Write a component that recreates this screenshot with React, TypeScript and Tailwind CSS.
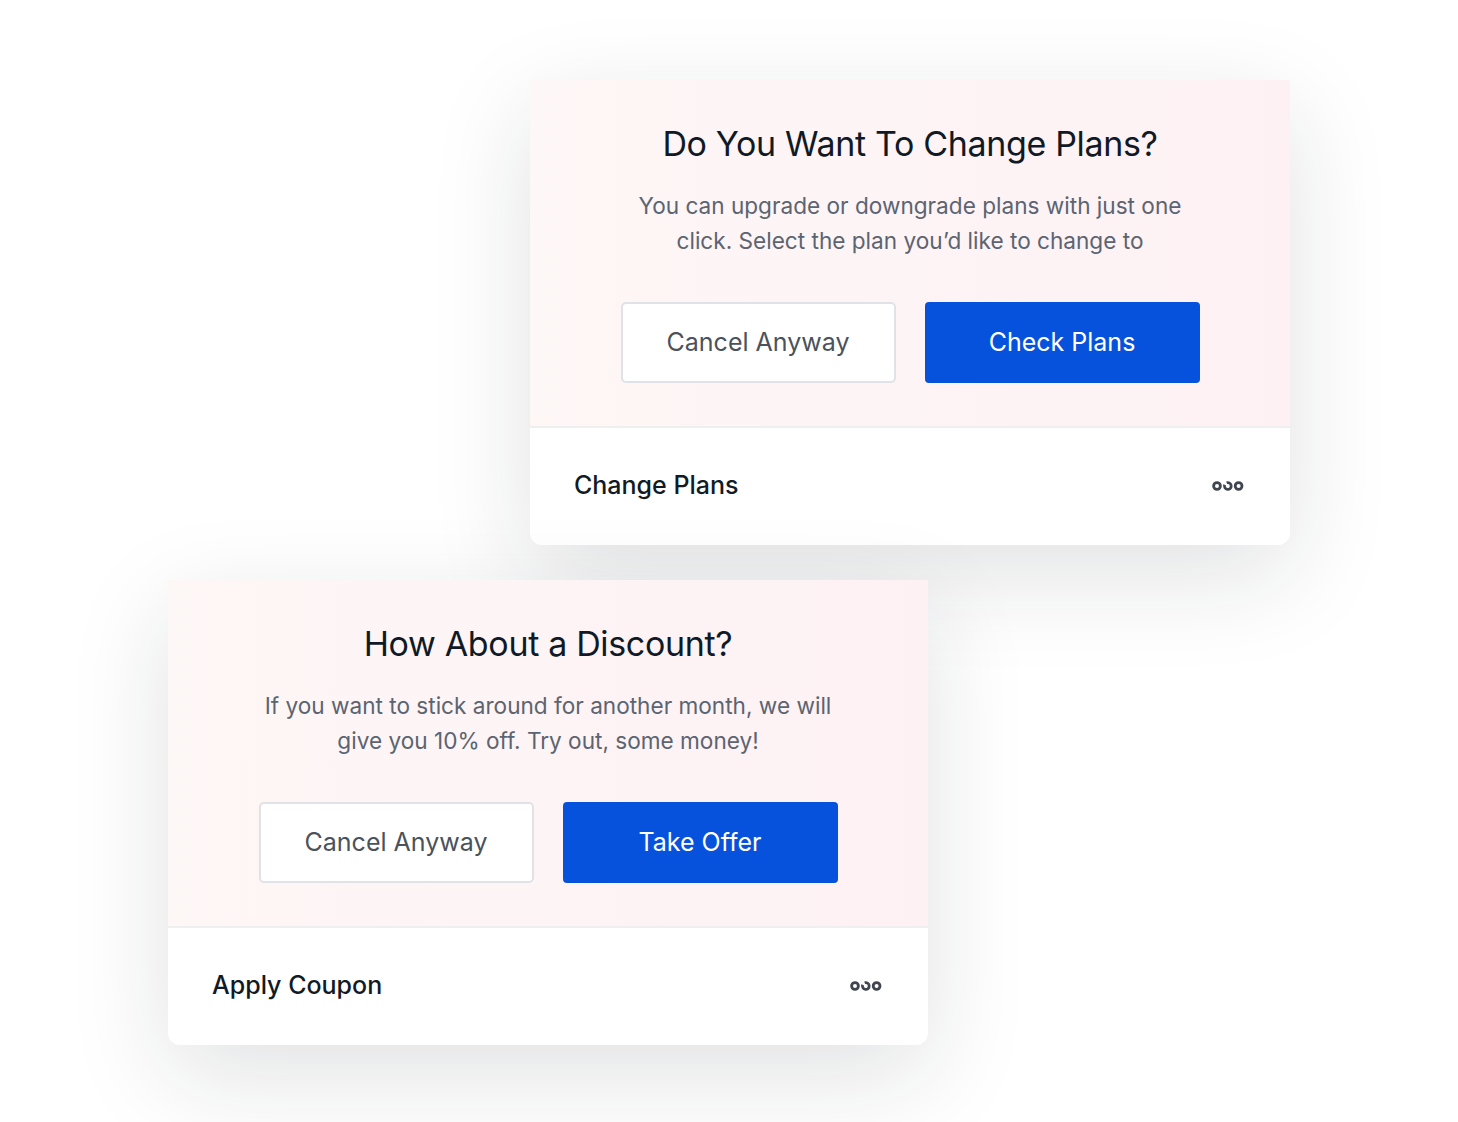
type CardProps = {
  title: string;
  lines: [string, string];
  primary: string;
  footer: string;
};

function RingDots() {
  return (
    <svg width="32" height="12" viewBox="0 0 32 12" fill="none" aria-hidden>
      <circle cx="5" cy="6" r="3.4" stroke="#3f4650" strokeWidth="2.8" />
      <path d="M14.64 2.8A3.4 3.4 0 1 1 12.6 4.84" stroke="#3f4650" strokeWidth="2.8" />
      <circle cx="26.6" cy="6" r="3.4" stroke="#3f4650" strokeWidth="2.8" />
    </svg>
  );
}

function OfferCard({ title, lines, primary, footer }: CardProps) {
  return (
    <div className="w-[760px] rounded-b-xl bg-white shadow-[0_30px_100px_rgba(20,28,40,0.13)]">
      {/* Offer body */}
      <div className="flex flex-col items-center bg-gradient-to-r from-[#fdf7f6] to-[#fdf1f4] px-10 pt-10 pb-[43px] text-center">
        <h2 className="text-[34px] leading-[48px] font-normal tracking-[-0.01em] text-[#101a27]">{title}</h2>
        <p className="mt-5 text-[22.6px] leading-[35px] text-[#5b6470]">
          {lines[0]}
          <br />
          {lines[1]}
        </p>
        <div className="mt-[44px] flex gap-[29px]">
          <button className="h-[81px] w-[275px] rounded-[5px] border-2 border-[#dfe2e6] bg-white text-[25px] text-[#4a525c]">
            Cancel Anyway
          </button>
          <button className="h-[81px] w-[275px] rounded-[4px] bg-[#0652dd] text-[25px] text-white">{primary}</button>
        </div>
      </div>

      {/* Footer row */}
      <div className="flex h-[119px] items-center justify-between border-t-2 border-[#efefef] pb-0.5 pl-[44px] pr-[46px]">
        <span className="text-[25px] font-medium text-[#111a25]">{footer}</span>
        <RingDots />
      </div>
    </div>
  );
}

export default function App() {
  return (
    <main
      className="min-h-screen w-full overflow-hidden bg-white pt-[80px] pb-[77px]"
      style={{ fontFamily: "Inter, 'Noto Sans', sans-serif" }}
    >
      <div className="ml-[530px]">
        <OfferCard
          title="Do You Want To Change Plans?"
          lines={["You can upgrade or downgrade plans with just one", "click. Select the plan you’d like to change to"]}
          primary="Check Plans"
          footer="Change Plans"
        />
      </div>
      <div className="ml-[168px] mt-[35px]">
        <OfferCard
          title="How About a Discount?"
          lines={["If you want to stick around for another month, we will", "give you 10% off. Try out, some money!"]}
          primary="Take Offer"
          footer="Apply Coupon"
        />
      </div>
    </main>
  );
}
